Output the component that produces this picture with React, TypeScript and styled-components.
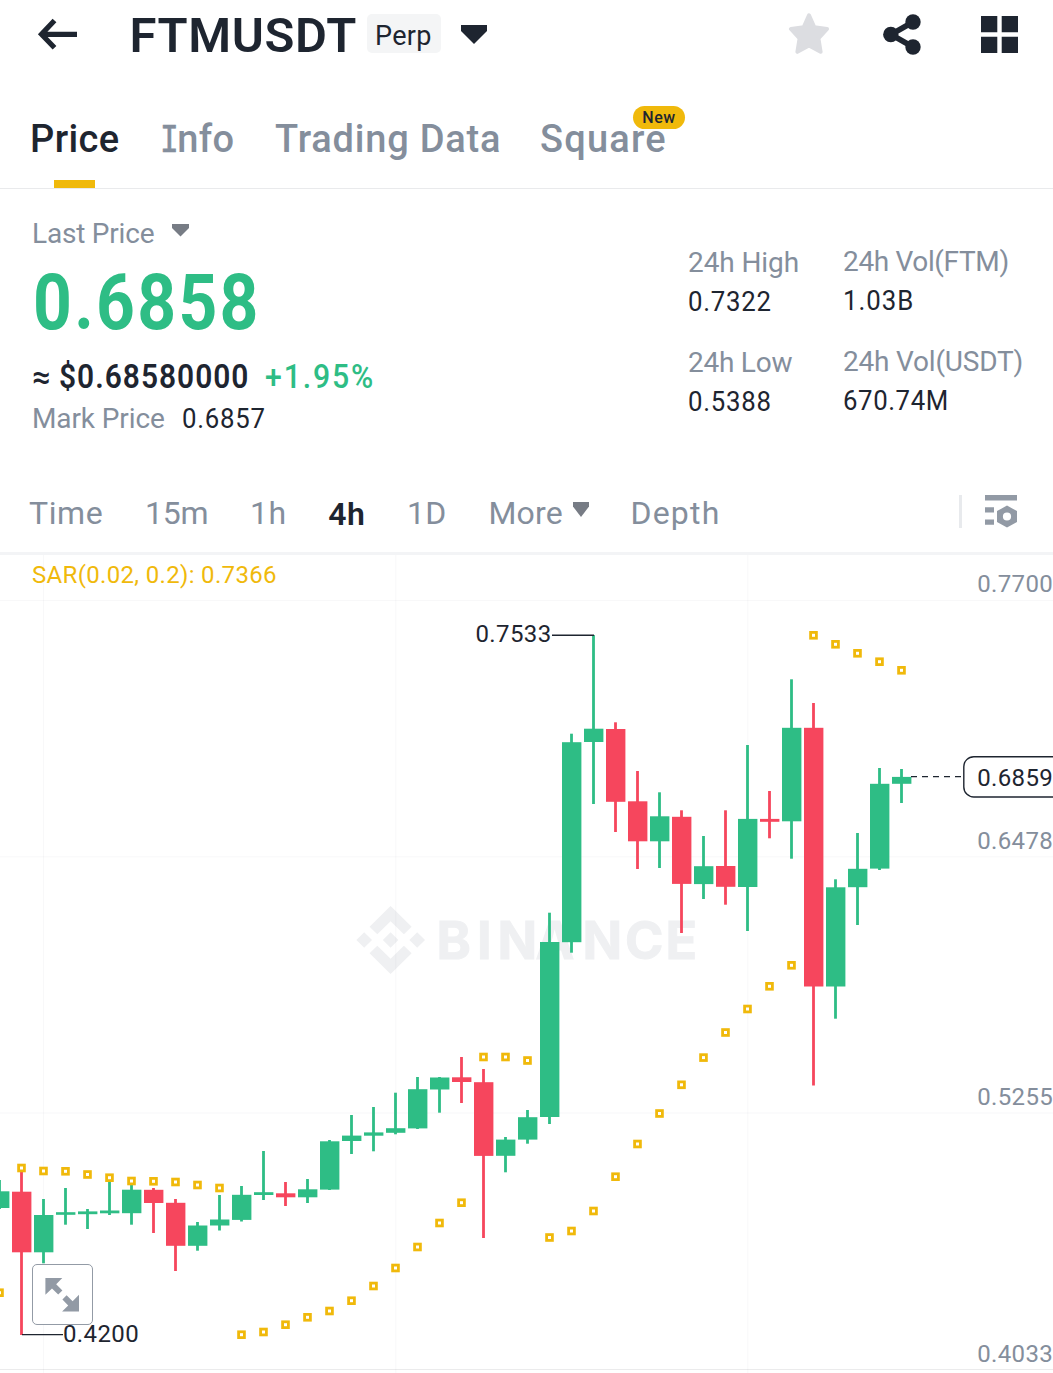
import React from "react";
import styled, { createGlobalStyle } from "styled-components";

const ink = "#1e2530";
const muted = "#848e9c";
const up = "#2ebd85";
const down = "#f6465d";
const gold = "#f0b90b";
const sans = `Roboto, "Noto Sans", sans-serif`;

const GlobalStyle = createGlobalStyle`
  * { box-sizing: border-box; }
  body { margin: 0; background: #fff; }
  button { border: 0; padding: 0; background: none; font: inherit; color: inherit; text-align: left; }
  svg { display: block; flex: none; }
`;

const Screen = styled.main`
  width: 1053px;
  height: 1373px;
  overflow: hidden;
  background: #fff;
  color: ${ink};
  font-family: ${sans};
  white-space: nowrap;
`;

/* Header */
const Header = styled.header`
  display: flex;
  align-items: center;
  height: 68px;
  padding: 0 35px 0 37px;
`;
const Title = styled.h1`
  margin: 0 0 0 51.5px;
  padding-top: 4px;
  width: 237.5px;
  font-size: 49px;
  line-height: 60px;
  font-weight: 600;
  letter-spacing: 0.6px;
`;
const ContractTag = styled.span`
  width: 74px;
  height: 39px;
  padding: 3px 0 0 8px;
  margin: 0 20px 2px 0;
  border-radius: 5px;
  background: #f4f5f6;
  font-size: 27px;
  line-height: 38px;
  letter-spacing: 0.3px;
`;
const HeaderActions = styled.div`
  display: flex;
  align-items: center;
  margin-left: auto;
`;
const HeaderAction = styled.button<{ $after?: number }>`
  margin-right: ${(p) => p.$after ?? 0}px;
`;

/* Tabs */
const Tabs = styled.nav`
  display: grid;
  grid-template-columns: 129.5px 115.5px 265px auto;
  height: 121px;
  padding: 48px 0 0 30px;
  border-bottom: 1px solid #e9eaec;
`;
const Tab = styled.button<{ $active?: boolean; $spacing?: number }>`
  position: relative;
  display: flex;
  flex-direction: column;
  align-items: flex-start;
  font-size: 38px;
  line-height: 46px;
  font-weight: 500;
  letter-spacing: ${(p) => p.$spacing ?? 0}px;
  color: ${(p) => (p.$active ? ink : muted)};
`;
const TabLabel = styled.span`
  display: block;
  height: 46px;
`;
const SerifCap = styled.span`
  display: inline-block;
  width: 17.8px;
  font-family: "DejaVu Sans Mono", monospace;
  font-size: 37px;
  line-height: 40px;
  font-weight: 400;
  -webkit-text-stroke: 0.6px ${muted};
  transform: scaleX(0.84);
  transform-origin: left;
`;
const TabBar = styled.span`
  width: 41px;
  height: 8px;
  margin: 18px 0 0 24px;
  background: ${gold};
`;
const NewBadge = styled.span`
  position: absolute;
  left: 93px;
  top: -10px;
  width: 52px;
  height: 23px;
  border-radius: 12px;
  background: ${gold};
  color: ${ink};
  font-size: 16px;
  line-height: 23px;
  font-weight: 500;
  letter-spacing: 0.5px;
  text-align: center;
`;

/* Quote */
const Quote = styled.section`
  display: grid;
  grid-template-columns: 656px 155px auto;
  height: 283px;
  padding-left: 32px;
`;
const PriceColumn = styled.div`
  display: flex;
  flex-direction: column;
  padding-top: 27px;
`;
const PriceRow = styled.div<{ $top?: number; $line: number }>`
  display: flex;
  align-items: center;
  height: ${(p) => p.$line}px;
  line-height: ${(p) => p.$line}px;
  margin-top: ${(p) => p.$top ?? 0}px;
`;
const Caption = styled.span<{ $width?: number; $spacing?: number }>`
  width: ${(p) => (p.$width ? `${p.$width}px` : "auto")};
  font-size: 28px;
  color: ${muted};
  letter-spacing: ${(p) => p.$spacing ?? 0}px;
`;
const Figure = styled.span<{ $spacing?: number }>`
  font-size: 28px;
  letter-spacing: ${(p) => p.$spacing ?? 0}px;
  transform: scaleX(0.92);
  transform-origin: left;
`;
const LastPrice = styled.strong`
  margin-left: 1px;
  font-size: 77px;
  font-weight: 700;
  letter-spacing: 2.6px;
  color: ${up};
  transform: scaleX(0.88);
  transform-origin: left;
`;
const Approx = styled.span`
  width: 27px;
  font-size: 32px;
  font-weight: 600;
`;
const FiatPrice = styled.span`
  width: 205.5px;
  font-size: 32.5px;
  font-weight: 600;
  letter-spacing: 1.1px;
  transform: scaleX(0.92);
  transform-origin: left;
`;
const Change = styled.span`
  font-size: 32.5px;
  font-weight: 500;
  letter-spacing: 2px;
  color: ${up};
  transform: scaleX(0.93);
  transform-origin: left;
`;
const StatColumn = styled.div<{ $top: number; $gap: number; $line: number }>`
  display: flex;
  flex-direction: column;
  gap: ${(p) => p.$gap}px;
  padding-top: ${(p) => p.$top}px;
  line-height: ${(p) => p.$line}px;
`;
const Stat = styled.div`
  display: flex;
  flex-direction: column;
`;

/* Intervals */
const Intervals = styled.nav`
  display: grid;
  grid-template-columns: 116px 105px 78.3px 78.7px 81.5px 142px 328.5px auto;
  align-items: center;
  height: 83px;
  padding: 2px 0 0 29px;
  border-bottom: 3px solid #f3f4f6;
`;
const Interval = styled.button<{ $active?: boolean; $spacing?: number }>`
  display: flex;
  align-items: center;
  gap: 10px;
  padding-top: ${(p) => (p.$active ? 1 : 0)}px;
  font-size: 32px;
  line-height: 40px;
  font-weight: ${(p) => (p.$active ? 600 : 400)};
  color: ${(p) => (p.$active ? ink : muted)};
  letter-spacing: ${(p) => p.$spacing ?? 0}px;
`;
const CaretSlot = styled.span<{ $lift: number }>`
  display: block;
  padding-bottom: ${(p) => p.$lift}px;
`;
const IndicatorTools = styled.div`
  display: flex;
  align-items: center;
  gap: 23px;
  padding-bottom: 4px;
`;
const Divider = styled.span`
  width: 3px;
  height: 33px;
  background: #e8eaed;
`;

/* Chart */
const ChartArea = styled.section`
  position: relative;
  height: 818px;
`;
const ExpandButton = styled.button`
  position: absolute;
  left: 32px;
  top: 709px;
  display: grid;
  place-items: center;
  width: 60.5px;
  height: 61px;
  border: 1.5px solid #939ba6;
  border-radius: 5px;
  background: #fff;
`;

type Candle = [bodyTop: number, bodyBottom: number, wickTop: number, wickBottom: number, rising: 0 | 1];

const candles: Candle[] = [
  [1191.3, 1208, 1180, 1209, 1],
  [1191.7, 1252.3, 1171, 1335, 0],
  [1215, 1252.3, 1199, 1263.3, 1],
  [1212.2, 1214.8, 1188, 1224.7, 1],
  [1211.4, 1214.2, 1209, 1229, 1],
  [1210.5, 1213.3, 1181, 1215, 1],
  [1189.7, 1213.2, 1182, 1224.7, 1],
  [1189.8, 1203, 1188, 1233, 0],
  [1202.8, 1245.8, 1199, 1271, 0],
  [1225.5, 1245.8, 1222, 1250.7, 1],
  [1219.5, 1225.5, 1195, 1230.5, 1],
  [1194.8, 1219.9, 1186, 1221.5, 1],
  [1192.2, 1195, 1151, 1200, 1],
  [1193.3, 1197.3, 1182, 1206, 0],
  [1189.3, 1197.3, 1179, 1203, 1],
  [1141.3, 1189.6, 1140, 1190, 1],
  [1135.6, 1141, 1115, 1154, 1],
  [1132.4, 1135.7, 1107, 1151.3, 1],
  [1128.2, 1132.8, 1092.7, 1134.3, 1],
  [1089.2, 1128.4, 1077, 1129, 1],
  [1077.5, 1089.5, 1077, 1112.7, 1],
  [1077.3, 1082, 1057, 1103, 0],
  [1082.2, 1155.9, 1069, 1238, 0],
  [1139.6, 1155.8, 1137, 1172.3, 1],
  [1117.2, 1139.6, 1110, 1143.7, 1],
  [942, 1117, 912.7, 1124, 1],
  [742.2, 942.2, 733.7, 952.7, 1],
  [728.7, 742, 635, 804, 1],
  [729, 801.8, 722.3, 832, 0],
  [801.3, 841.3, 771, 869, 0],
  [816.3, 841.3, 792.3, 868, 1],
  [816.8, 883.9, 810.3, 933, 0],
  [866.2, 884.1, 836, 899, 1],
  [866, 886.8, 810.3, 904.7, 0],
  [818.9, 887, 745, 931, 1],
  [818.9, 821.8, 791, 838.3, 0],
  [727.8, 821.3, 679.3, 858.7, 1],
  [727.8, 986.5, 703, 1085.5, 0],
  [887.3, 986.5, 879.3, 1018.7, 1],
  [868.8, 887.2, 833, 925, 1],
  [783.8, 868.6, 768, 870, 1],
  [776.9, 783.8, 769, 803, 1],
];

const sar: number[] = [
  1292.7, 1168, 1171, 1171.3, 1174.5, 1177.7, 1181, 1181.3, 1182, 1185, 1188, 1334.7, 1332, 1324.7,
  1317.3, 1311, 1300.7, 1286, 1268, 1247, 1223, 1202.7, 1057, 1057, 1060.5, 1237.5, 1231, 1211,
  1176.7, 1144, 1113.5, 1084.8, 1057.6, 1032.5, 1009, 986.3, 965.3, 635.3, 644.3, 653.3, 661.7, 670.3,
];

const priceScale: [string, number][] = [
  ["0.7700", 592.3],
  ["0.6478", 849.3],
  ["0.5255", 1105.3],
  ["0.4033", 1362.3],
];

const step = 22;
const slotX = (i: number) => 21.5 + (i - 1) * step;

const PriceChart = () => (
  <svg width="1053" height="818" viewBox="0 555 1053 818" fontFamily={sans} fontSize="24" letterSpacing="0.37">
    <g fill="#eff0f2">
      <g transform="translate(390.6 940)">
        <path d="M0-34 21-13.3 13.3-5.8 0-18.8-13.3-5.8-21-13.3Z" />
        <path d="M0 34 21 13.3 13.3 5.8 0 18.8-13.3 5.8-21 13.3Z" />
        <path d="M0-7.8 7.8 0 0 7.8-7.8 0Z" />
        <path d="M-26.4-7.8-18.6 0-26.4 7.8-34.2 0Z" />
        <path d="M26.6-7.8 34.4 0 26.6 7.8 18.8 0Z" />
      </g>
      <text
        x="436.5 477 497.5 535.5 582.5 625 665.5"
        y="958.6"
        fontFamily="Inter, sans-serif"
        fontWeight="700"
        fontSize="52"
        letterSpacing="0"
        stroke="#eff0f2"
        strokeWidth="1"
      >
        BINANCE
      </text>
    </g>

    <g stroke="#1e2530" strokeOpacity="0.03">
      <path d="M43.5 555V1373M395.8 555V1373M747.8 555V1373" />
      <path d="M0 600.5H1053M0 856.8H1053M0 1113H1053" />
      <path d="M0 1369.5H1053" strokeOpacity="0.09" />
    </g>

    {candles.map(([top, bottom, high, low, rising], i) => (
      <g key={i} fill={rising ? up : down}>
        <rect x={slotX(i) - 1.4} y={high} width="2.8" height={low - high} />
        <rect x={slotX(i) - 9.5} y={top} width="19.4" height={bottom - top} />
      </g>
    ))}

    {sar.map((y, i) => (
      <rect key={i} x={slotX(i) - 2.9} y={y - 2.9} width="5.8" height="5.8" fill="#fff" stroke={gold} strokeWidth="2.8" />
    ))}

    <text x="32" y="583.2" fill={gold} letterSpacing="0.33">
      SAR(0.02, 0.2): 0.7366
    </text>

    <g stroke={ink} strokeWidth="1.4" fill="none">
      <path d="M552 635.3H594" />
      <path d="M22 1334.6H63" />
      <path d="M911 776.6H962" strokeDasharray="6 5" />
      <rect x="963.8" y="756.7" width="110" height="40.3" rx="10" fill="#fff" />
    </g>
    <g fill={ink}>
      <text x="475.5" y="642.2">0.7533</text>
      <text x="63" y="1342.3">0.4200</text>
      <text x="977.2" y="786.2">0.6859</text>
    </g>
    <g fill={muted}>
      {priceScale.map(([label, y]) => (
        <text key={label} x="977.2" y={y}>
          {label}
        </text>
      ))}
    </g>
  </svg>
);

const BackIcon = () => (
  <svg width="41" height="34" viewBox="0 0 41 34" fill="none" stroke={ink} strokeWidth="5.2">
    <path d="M17.5 3.5 4.5 17.3l13 13.5M4.5 17.3H40" />
  </svg>
);
const Caret = ({ w, h, shoulder, color }: { w: number; h: number; shoulder: number; color: string }) => (
  <svg width={w} height={h} viewBox={`0 0 ${w} ${h}`} fill={color}>
    <path d={`M0 0H${w}V${shoulder}L${w / 2} ${h} 0 ${shoulder}Z`} />
  </svg>
);
const StarIcon = () => (
  <svg width="42" height="42" viewBox="0 0 42 42" fill="#dcdde1" stroke="#dcdde1" strokeWidth="4" strokeLinejoin="round">
    <path d="M21 2.4 26.3 14.3 39 16 30.4 25.3 32.6 38.8 21 32.6 9.4 38.8 11.6 25.3 3 16 15.7 14.3Z" />
  </svg>
);
const ShareIcon = () => (
  <svg width="38" height="41" viewBox="0 0 38 41" fill={ink}>
    <path d="M30 8 8 20.5 30 33" fill="none" stroke={ink} strokeWidth="5.6" />
    <circle cx="30" cy="8" r="7.7" />
    <circle cx="7.8" cy="20.5" r="7.7" />
    <circle cx="30" cy="33" r="7.7" />
  </svg>
);
const GridIcon = () => (
  <svg width="37" height="37" viewBox="0 0 37 37" fill={ink}>
    <path d="M0 0H16.3V16.3H0ZM20.7 0H37V16.3H20.7ZM0 20.7H16.3V37H0ZM20.7 20.7H37V37H20.7Z" />
  </svg>
);
const IndicatorIcon = () => (
  <svg width="33" height="33" viewBox="0 0 33 33" fill="#929aa5">
    <path d="M0 0H32V5.4H0ZM0 12.3H9V17.6H0ZM0 24.4H9V29.8H0Z" />
    <path
      fillRule="evenodd"
      d="M22 10.6 32 16.1V27L22 32.5 12 27V16.1ZM22 17.4A4.1 4.1 0 1 0 22 25.6 4.1 4.1 0 1 0 22 17.4Z"
    />
  </svg>
);
const ExpandIcon = () => (
  <svg width="35" height="34" viewBox="0 0 35 34" fill="#929aa5">
    <path d="M0.4 0H17.3L11.2 6.2 17.4 12.5 13.2 16.6 7 10.4 0.4 16.8Z" />
    <path d="M34 33.6H17.1L23.2 27.4 17.4 21.4 21.6 17.2 27.6 23.2 34 16.8Z" />
  </svg>
);

export default function App() {
  return (
    <Screen>
      <GlobalStyle />
      <Header>
        <button aria-label="Back">
          <BackIcon />
        </button>
        <Title>FTMUSDT</Title>
        <ContractTag>Perp</ContractTag>
        <Caret w={26} h={19} shoulder={6} color={ink} />
        <HeaderActions>
          <HeaderAction aria-label="Favourite" $after={53}>
            <StarIcon />
          </HeaderAction>
          <HeaderAction aria-label="Share" $after={60}>
            <ShareIcon />
          </HeaderAction>
          <HeaderAction aria-label="Menu">
            <GridIcon />
          </HeaderAction>
        </HeaderActions>
      </Header>

      <Tabs>
        <Tab $active $spacing={0.4}>
          <TabLabel>Price</TabLabel>
          <TabBar />
        </Tab>
        <Tab $spacing={0.3}>
          <TabLabel>
            <SerifCap>I</SerifCap>nfo
          </TabLabel>
        </Tab>
        <Tab $spacing={0.8}>
          <TabLabel>Trading Data</TabLabel>
        </Tab>
        <Tab $spacing={1.2}>
          <TabLabel>Square</TabLabel>
          <NewBadge>New</NewBadge>
        </Tab>
      </Tabs>

      <Quote>
        <PriceColumn>
          <PriceRow $line={36}>
            <Caption $width={140} $spacing={-0.2}>Last Price</Caption>
            <CaretSlot $lift={7}>
              <Caret w={17} h={12.5} shoulder={4} color="#777c85" />
            </CaretSlot>
          </PriceRow>
          <PriceRow $line={80} $top={11}>
            <LastPrice>0.6858</LastPrice>
          </PriceRow>
          <PriceRow $line={40} $top={14}>
            <Approx>≈</Approx>
            <FiatPrice>$0.68580000</FiatPrice>
            <Change>+1.95%</Change>
          </PriceRow>
          <PriceRow $line={36} $top={4}>
            <Caption $width={149.8} $spacing={-0.1}>Mark Price</Caption>
            <Figure $spacing={0.8}>0.6857</Figure>
          </PriceRow>
        </PriceColumn>
        <StatColumn $top={55} $gap={23} $line={38.5}>
          <Stat>
            <Caption $spacing={-0.1}>24h High</Caption>
            <Figure $spacing={0.8}>0.7322</Figure>
          </Stat>
          <Stat>
            <Caption $spacing={-0.25}>24h Low</Caption>
            <Figure $spacing={0.8}>0.5388</Figure>
          </Stat>
        </StatColumn>
        <StatColumn $top={52.6} $gap={21.7} $line={39.3}>
          <Stat>
            <Caption $spacing={-0.35}>24h Vol(FTM)</Caption>
            <Figure $spacing={1.1}>1.03B</Figure>
          </Stat>
          <Stat>
            <Caption $spacing={-0.2}>24h Vol(USDT)</Caption>
            <Figure $spacing={0.65}>670.74M</Figure>
          </Stat>
        </StatColumn>
      </Quote>

      <Intervals>
        <Interval $spacing={0.6}>Time</Interval>
        <Interval $spacing={-0.2}>15m</Interval>
        <Interval $spacing={0.5}>1h</Interval>
        <Interval $active $spacing={0.4}>4h</Interval>
        <Interval $spacing={0.3}>1D</Interval>
        <Interval $spacing={0.2}>
          More
          <CaretSlot $lift={8}>
            <Caret w={16} h={15} shoulder={4.5} color="#777c85" />
          </CaretSlot>
        </Interval>
        <Interval $spacing={1.2}>Depth</Interval>
        <IndicatorTools>
          <Divider />
          <IndicatorIcon />
        </IndicatorTools>
      </Intervals>

      <ChartArea>
        <PriceChart />
        <ExpandButton aria-label="Expand chart">
          <ExpandIcon />
        </ExpandButton>
      </ChartArea>
    </Screen>
  );
}
